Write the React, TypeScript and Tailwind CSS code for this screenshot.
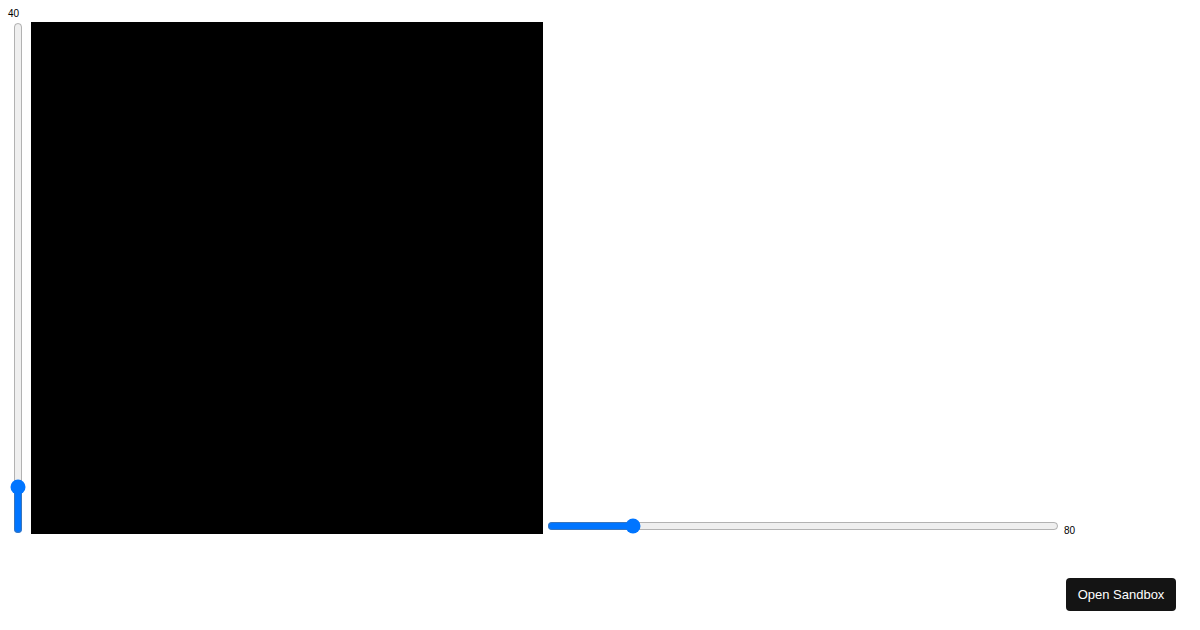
import React from "react";

export default function App() {
  return (
    <div className="relative w-[1200px] h-[630px] bg-white" style={{ fontFamily: '"Liberation Sans", Arial, sans-serif' }}>
      <div className="flex items-end pl-[8px] pt-[8px]">
        <div className="flex flex-col items-start">
          <span className="text-[10px] leading-[12px] text-black">40</span>
          <input
            type="range"
            min={0}
            max={512}
            defaultValue={40}
            className="m-[2px] h-[512px] w-[16px] [writing-mode:vertical-lr] [direction:rtl]"
          />
        </div>
        <div className="ml-[3px] mb-[2px] h-[512px] w-[512px] bg-black" />
        <div className="flex items-end mb-[2px]">
          <input type="range" min={0} max={512} defaultValue={80} className="ml-[4px] mr-[2px] w-[512px]" />
          <span className="ml-[3px] mb-[-3px] text-[10px] leading-[12px] text-black">80</span>
        </div>
      </div>
      <button className="absolute right-[24px] bottom-[19px] h-[33px] w-[110px] rounded-[4px] bg-[#141414] text-[13px] text-white" style={{ fontFamily: '"Liberation Sans", Arial, sans-serif' }}>
        Open Sandbox
      </button>
    </div>
  );
}
